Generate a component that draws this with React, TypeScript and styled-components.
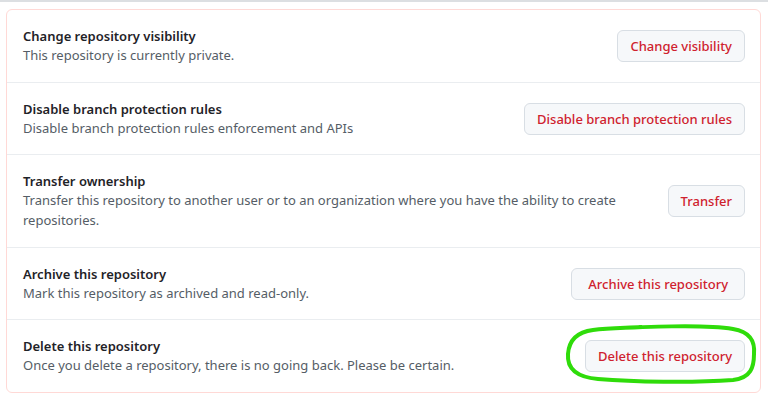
import React from "react";
import styled, { createGlobalStyle } from "styled-components";

interface Setting {
  title: string;
  description: string;
  action: string;
  roomy?: boolean;
  highlighted?: boolean;
}

const settings: Setting[] = [
  {
    title: "Change repository visibility",
    description: "This repository is currently private.",
    action: "Change visibility",
  },
  {
    title: "Disable branch protection rules",
    description: "Disable branch protection rules enforcement and APIs",
    action: "Disable branch protection rules",
  },
  {
    title: "Transfer ownership",
    description:
      "Transfer this repository to another user or to an organization where you have the ability to create repositories.",
    action: "Transfer",
  },
  {
    title: "Archive this repository",
    description: "Mark this repository as archived and read-only.",
    action: "Archive this repository",
    roomy: true,
  },
  {
    title: "Delete this repository",
    description:
      "Once you delete a repository, there is no going back. Please be certain.",
    action: "Delete this repository",
    highlighted: true,
  },
];

const App = () => {
  return (
    <>
      <GlobalStyle />
      <TopRule />
      <DangerZone>
        {settings.map((s) => (
          <SettingRow key={s.title}>
            <SettingText>
              <SettingTitle>{s.title}</SettingTitle>
              <SettingDescription>{s.description}</SettingDescription>
            </SettingText>
            <ButtonWrap>
              <DangerButton $roomy={s.roomy}>{s.action}</DangerButton>
              {s.highlighted && (
                <Scribble viewBox="0 0 196 63" width="196" height="63">
                  <path
                    d="M 40 7 C 80 5, 140 2, 170 7 C 188 10, 192 20, 191 32 C 191 45, 188 56, 170 58 C 130 61, 70 60, 35 57 C 12 55, 4 45, 5 32 C 6 18, 14 10, 30 8 C 45 6, 60 6, 78 5"
                    fill="none"
                    stroke="#2fdc0a"
                    strokeWidth="4"
                    strokeLinecap="round"
                  />
                </Scribble>
              )}
            </ButtonWrap>
          </SettingRow>
        ))}
      </DangerZone>
    </>
  );
};

const GlobalStyle = createGlobalStyle`
  body {
    margin: 0;
    background: #ffffff;
    font-family: "Noto Sans", "Liberation Sans", sans-serif;
    font-size: 13px;
    color: #1f2328;
  }
`;

const TopRule = styled.div`
  height: 2px;
  background: #dcdfe2;
`;

const DangerZone = styled.div`
  margin: 7px 7px 0 6px;
  border: 1px solid #ffd9d6;
  border-radius: 6px;
`;

const SettingRow = styled.div`
  display: flex;
  align-items: center;
  gap: 16px;
  padding: 17px 15px 16.5px 16px;
  & + & {
    border-top: 1px solid #eaedf0;
  }
`;

const SettingText = styled.div`
  flex: 1;
  min-width: 0;
`;

const SettingTitle = styled.div`
  font-weight: 600;
  line-height: 18px;
  color: #1f2328;
`;

const SettingDescription = styled.div`
  line-height: 20px;
  color: #555d66;
`;

const ButtonWrap = styled.div`
  position: relative;
  flex-shrink: 0;
`;

const DangerButton = styled.button<{ $roomy?: boolean }>`
  height: 32px;
  padding: 0 ${(p) => (p.$roomy ? "16px" : "12px")};
  font-family: inherit;
  font-size: 13px;
  font-weight: 500;
  color: #cf222e;
  background: #f6f8fa;
  border: 1px solid #d8dee4;
  border-radius: 6px;
  cursor: pointer;
`;

const Scribble = styled.svg`
  position: absolute;
  left: -22px;
  top: -18px;
  pointer-events: none;
`;

export default App;
